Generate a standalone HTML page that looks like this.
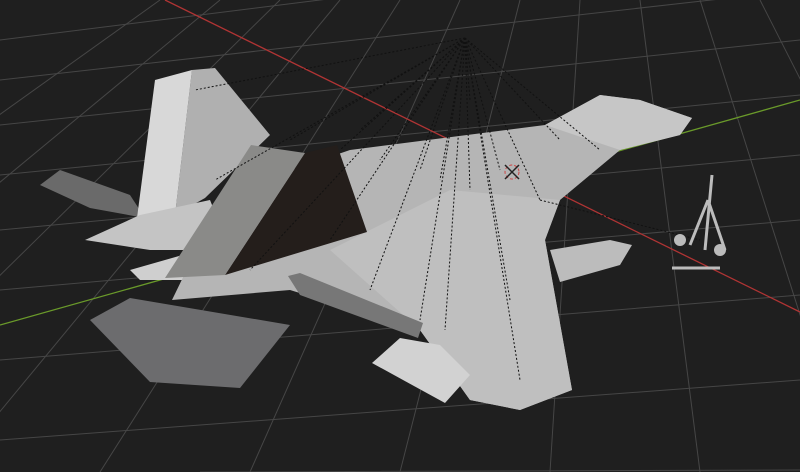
<!DOCTYPE html>
<html><head><meta charset="utf-8"><style>
html,body{margin:0;padding:0;background:#1e1e1e;width:800px;height:472px;overflow:hidden}
svg{display:block}
</style></head><body>
<svg width="800" height="472" viewBox="0 0 800 472" xmlns="http://www.w3.org/2000/svg">
<rect width="800" height="472" fill="#1f1f1f"/>
<g stroke="#464646" stroke-width="1" fill="none">
<path d="M0 40 L800 -60 M0 80 L800 -10 M0 125 L800 40 M0 175 L800 95 M0 230 L800 155 M0 290 L800 220 M0 360 L800 295 M0 440 L800 380 M200 472 L800 470"/>
<path d="M-200 472 L280 0 M-50 472 L340 0 M100 472 L400 0 M250 472 L460 0 M400 472 L520 0 M550 472 L580 0 M700 472 L640 0 M850 472 L700 0 M1000 472 L760 0 M1150 472 L820 0 M1300 472 L880 0 M-350 472 L220 0 M-500 472 L160 0"/>
</g>
<path d="M165 0 L800 312" stroke="#b03434" stroke-width="1.3"/>
<path d="M0 325 L800 100" stroke="#6a9a2a" stroke-width="1.3"/>
<!-- left stabilizer -->
<polygon points="40,185 60,170 130,195 145,218 90,208" fill="#6a6a6a"/>
<!-- left vertical tail -->
<polygon points="192,70 215,68 270,135 205,198 175,215" fill="#b0b0b0"/>
<polygon points="155,80 192,70 175,215 137,218" fill="#d8d8d8"/>
<polygon points="85,240 140,215 210,200 230,250 150,250" fill="#c4c4c4"/>
<polygon points="130,270 200,250 210,280 140,280" fill="#cfcfcf"/>
<!-- main body -->
<polygon points="692,118 640,100 600,95 545,125 350,150 262,180 205,232 172,300 290,290 420,330 470,400 520,410 572,390 545,240 560,200 620,150 680,135" fill="#b5b5b5"/>
<polygon points="545,125 600,95 640,100 692,118 680,135 620,150 590,140" fill="#c6c6c6"/>
<polygon points="560,200 545,240 572,390 520,410 470,400 420,330 330,250 450,190" fill="#bfbfbf"/>
<polygon points="550,250 610,240 632,245 620,265 560,282" fill="#bcbcbc"/>
<!-- dark tail -->
<polygon points="305,153 337,145 367,232 225,275" fill="#241e1b"/>
<polygon points="165,278 251,145 305,153 225,275" fill="#8a8a88"/>
<!-- bottom left stabilizer -->
<polygon points="90,320 130,298 290,325 240,388 150,382" fill="#6c6c6e"/>
<polygon points="288,276 300,273 423,323 418,338 300,295" fill="#777"/>
<polygon points="372,363 400,338 440,345 470,375 445,403" fill="#d2d2d2"/>
<!-- dotted lines -->
<g stroke="#111" stroke-width="1" stroke-dasharray="2,2">
<path d="M465 38 L195 90 M465 38 L215 180 M465 38 L290 140 M465 38 L340 150 M465 38 L380 160 M465 38 L420 170 M465 38 L440 180 M465 38 L470 190 M465 38 L500 170 M465 38 L540 200 M465 38 L520 380 M465 38 L510 300 M465 38 L445 330 M465 38 L420 320 M465 38 L370 290 M465 38 L330 240 M465 38 L250 270 M465 38 L560 140 M465 38 L600 150 M465 38 L470 100 M465 38 L410 120 M465 38 L360 130 M540 200 L700 240"/>
</g>
<!-- landing gear -->
<g stroke="#bcbcbc" stroke-width="3" fill="none">
<path d="M712 175 L705 250 M708 200 L690 245 M708 200 L725 250 M672 268 L720 268"/>
</g>
<circle cx="680" cy="240" r="6" fill="#bbb"/><circle cx="720" cy="250" r="6" fill="#bbb"/>
<circle cx="512" cy="172" r="7" fill="none" stroke="#c44" stroke-width="1" stroke-dasharray="3,2"/>
<path d="M505 165 l14 14 m0 -14 l-14 14" stroke="#222" stroke-width="1.5"/>
</svg>
</body></html>
